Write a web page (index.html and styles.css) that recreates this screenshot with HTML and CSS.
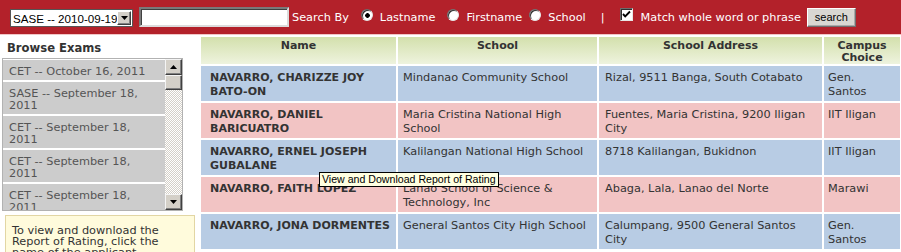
FILE: index.html
```html
<!DOCTYPE html>
<html>
<head>
<meta charset="utf-8">
<title>Exam Results</title>
<link rel="stylesheet" href="styles.css">
</head>
<body>
<header class="topbar">
  <div class="select">
    <span class="select-text">SASE -- 2010-09-19</span>
    <span class="select-btn"><svg width="7" height="4" viewBox="0 0 7 4"><path d="M0 0h7L3.5 4z" fill="#000"/></svg></span>
  </div>
  <input class="textbox" type="text" value="">
  <span class="lbl">Search By</span>
  <label class="opt"><span class="radio checked"></span>Lastname</label>
  <label class="opt"><span class="radio"></span>Firstname</label>
  <label class="opt opt-tight"><span class="radio"></span>School</label>
  <span class="sep">|</span>
  <label class="chk"><span class="checkbox"><svg width="11" height="11" viewBox="0 0 11 11"><path d="M2 5l2.2 2.3L9 2.5" fill="none" stroke="#000" stroke-width="1.9"/></svg></span>Match whole word or phrase</label>
  <button class="btn" type="button">search</button>
</header>
<div class="main">
  <aside class="side">
    <h2 class="side-title">Browse Exams</h2>
    <div class="listbox">
      <ul class="items">
        <li>CET -- October 16, 2011</li>
        <li>SASE -- September 18, 2011</li>
        <li>CET -- September 18, 2011</li>
        <li>CET -- September 18, 2011</li>
        <li>CET -- September 18, 2011</li>
      </ul>
      <div class="scrollbar">
        <span class="sb-btn"><svg width="7" height="4" viewBox="0 0 7 4"><path d="M0 4h7L3.5 0z" fill="#000"/></svg></span>
        <span class="sb-thumb"></span>
        <span class="sb-track"></span>
        <span class="sb-btn"><svg width="7" height="4" viewBox="0 0 7 4"><path d="M0 0h7L3.5 4z" fill="#000"/></svg></span>
      </div>
    </div>
    <div class="note">To view and download the Report of Rating, click the name of the applicant.</div>
  </aside>
  <section class="results">
    <table class="grid">
      <colgroup>
        <col class="c-name"><col class="c-school"><col class="c-addr"><col class="c-campus">
      </colgroup>
      <thead>
        <tr><th>Name</th><th>School</th><th>School Address</th><th>Campus Choice</th></tr>
      </thead>
      <tbody>
        <tr class="blue"><td class="name">NAVARRO, CHARIZZE JOY BATO-ON</td><td>Mindanao Community School</td><td class="addr">Rizal, 9511 Banga, South Cotabato</td><td class="campus">Gen. Santos</td></tr>
        <tr class="pink"><td class="name">NAVARRO, DANIEL BARICUATRO</td><td>Maria Cristina National High School</td><td class="addr">Fuentes, Maria Cristina, 9200 Iligan City</td><td class="campus">IIT Iligan</td></tr>
        <tr class="blue"><td class="name">NAVARRO, ERNEL JOSEPH GUBALANE</td><td>Kalilangan National High School</td><td class="addr">8718 Kalilangan, Bukidnon</td><td class="campus">IIT Iligan</td></tr>
        <tr class="pink"><td class="name">NAVARRO, FAITH LOPEZ</td><td>Lanao School of Science &amp; Technology, Inc</td><td class="addr">Abaga, Lala, Lanao del Norte</td><td class="campus">Marawi</td></tr>
        <tr class="blue"><td class="name">NAVARRO, JONA DORMENTES</td><td>General Santos City High School</td><td class="addr">Calumpang, 9500 General Santos City</td><td class="campus">Gen. Santos</td></tr>
      </tbody>
    </table>
  </section>
</div>
<div class="tooltip">View and Download Report of Rating</div>
</body>
</html>
```

FILE: styles.css
```css
html, body {
  margin: 0;
  padding: 0;
  overflow: hidden;
}
body {
  width: 901px;
  height: 252px;
  position: relative;
  font-family: "DejaVu Sans", Verdana, sans-serif;
  font-size: 11.3px;
  color: #333;
  background: #fff;
}

/* top search bar */
.topbar {
  display: flex;
  align-items: center;
  height: 34px;
  background: #b3212a;
  border-bottom: 1px solid #f1c6c6;
  color: #fff;
  padding-left: 10px;
  white-space: nowrap;
}
.select {
  display: flex;
  align-items: center;
  width: 123px;
  height: 18px;
  box-sizing: border-box;
  border: 1px solid #555;
  background: #fff;
  margin-top: 2px;
}
.select-text {
  flex: 1;
  padding-left: 2px;
  font-family: "Liberation Sans", Arial, sans-serif;
  font-size: 11.6px;
  color: #000;
}
.select-btn {
  display: flex;
  align-items: center;
  justify-content: center;
  width: 14px;
  height: 14px;
  box-sizing: border-box;
  margin-right: 1px;
  background: #d4d0c8;
  border: 1px solid;
  border-color: #fff #404040 #404040 #fff;
  box-shadow: inset -1px -1px 0 #808080;
}
.textbox {
  margin: 0 0 0 6px;
  width: 150px;
  height: 20px;
  box-sizing: border-box;
  border: 2px solid;
  border-color: #7a7a7a #dcdcdc #dcdcdc #7a7a7a;
  box-shadow: inset 1px 1px 0 #404040;
  background: #fff;
  padding: 0;
}
.lbl {
  margin-left: 3px;
}
.opt {
  display: flex;
  align-items: center;
  gap: 7px;
  margin-left: 12px;
}
.opt-tight {
  margin-left: 7px;
}
.radio {
  width: 12px;
  height: 12px;
  box-sizing: border-box;
  border-radius: 50%;
  background: #fff;
  border: 1px solid;
  border-color: #6b6b6b #e8e8e8 #e8e8e8 #6b6b6b;
  box-shadow: inset 1px 1px 0 #303030;
  margin-bottom: 4px;
}
.radio.checked {
  background: radial-gradient(circle at 55% 55%, #000 0 2px, #fff 2.6px);
}
.sep {
  margin-left: 15px;
}
.chk {
  display: flex;
  align-items: center;
  gap: 8px;
  margin-left: 15px;
}
.checkbox {
  display: flex;
  align-items: center;
  justify-content: center;
  width: 13px;
  height: 13px;
  box-sizing: border-box;
  background: #fff;
  border: 1px solid;
  border-color: #6b6b6b #e8e8e8 #e8e8e8 #6b6b6b;
  box-shadow: inset 1px 1px 0 #303030;
  margin-bottom: 5px;
}
.btn {
  margin-left: 6px;
  width: 49px;
  height: 19px;
  box-sizing: border-box;
  padding: 0;
  font-family: "Liberation Sans", Arial, sans-serif;
  font-size: 11px;
  color: #000;
  background: #d9d7d2;
  border: 1px solid;
  border-color: #fff #6f6f6f #6f6f6f #fff;
  box-shadow: inset -1px -1px 0 #a9a9a9;
}

/* main area */
.main {
  display: flex;
  align-items: flex-start;
}
.side {
  flex: none;
  width: 199px;
}
.side-title {
  margin: 6px 0 2px 7px;
  font-size: 11.6px;
  line-height: 15px;
  font-weight: bold;
  color: #333;
}
.listbox {
  display: flex;
  margin-left: 2px;
  width: 181px;
  height: 153px;
  box-sizing: border-box;
  border: 1px solid #b2b2b2;
  overflow: hidden;
}
.items {
  list-style: none;
  margin: 0;
  padding: 1px 0 0;
  width: 162px;
  flex: none;
  overflow: hidden;
}
.items li {
  background: #cccccc;
  color: #555;
  padding: 6px 6px 2px;
  line-height: 12px;
  margin-bottom: 2px;
}
.scrollbar {
  display: flex;
  flex-direction: column;
  width: 17px;
  flex: none;
}
.sb-btn {
  display: flex;
  align-items: center;
  justify-content: center;
  height: 16px;
  box-sizing: border-box;
  background: #d4d0c8;
  border: 1px solid;
  border-color: #f4f4f4 #404040 #404040 #f4f4f4;
  box-shadow: inset -1px -1px 0 #808080;
}
.sb-thumb {
  height: 15px;
  box-sizing: border-box;
  background: #d4d0c8;
  border: 1px solid;
  border-color: #f4f4f4 #404040 #404040 #f4f4f4;
  box-shadow: inset -1px -1px 0 #808080;
}
.sb-track {
  flex: 1;
  background: repeating-conic-gradient(#fff 0 25%, #d4d0c8 0 50%) 0 0 / 2px 2px;
}
.note {
  margin: 4px 0 0 5px;
  width: 190px;
  box-sizing: border-box;
  border: 1px solid #e2d6a4;
  background: #fffbdc;
  padding: 9px 6px;
  line-height: 11px;
  color: #333;
}

/* results table */
.results {
  flex: none;
}
.grid {
  border-collapse: separate;
  border-spacing: 2px;
  table-layout: fixed;
  width: 703px;
}
.c-name { width: 195px; }
.c-school { width: 199px; }
.c-addr { width: 223px; }
.c-campus { width: 76px; }
.grid th {
  background: linear-gradient(to bottom, #d3e0ac, #eef3de);
  font-size: 11px;
  font-weight: bold;
  line-height: 12px;
  padding: 3px 4px 0;
  vertical-align: top;
  text-align: center;
  color: #333;
}
.grid td {
  padding: 5px 5px 2px;
  line-height: 14px;
  vertical-align: top;
  color: #333;
}
.grid tr.blue td { background: #b8cce4; }
.grid tr.pink td { background: #f2c4c4; }
.grid td.name {
  padding-left: 9px;
  padding-right: 2px;
  font-size: 11px;
  font-weight: bold;
}
.grid td.addr { padding-left: 6px; }
.grid td.campus { padding-left: 4px; padding-right: 6px; }

/* hover tooltip */
.tooltip {
  position: absolute;
  left: 319px;
  top: 172px;
  background: #ffffe1;
  border: 1px solid #000;
  padding: 0 2px;
  font-family: "Liberation Sans", Tahoma, sans-serif;
  font-size: 10.6px;
  line-height: 13px;
  color: #000;
  white-space: nowrap;
}
```
